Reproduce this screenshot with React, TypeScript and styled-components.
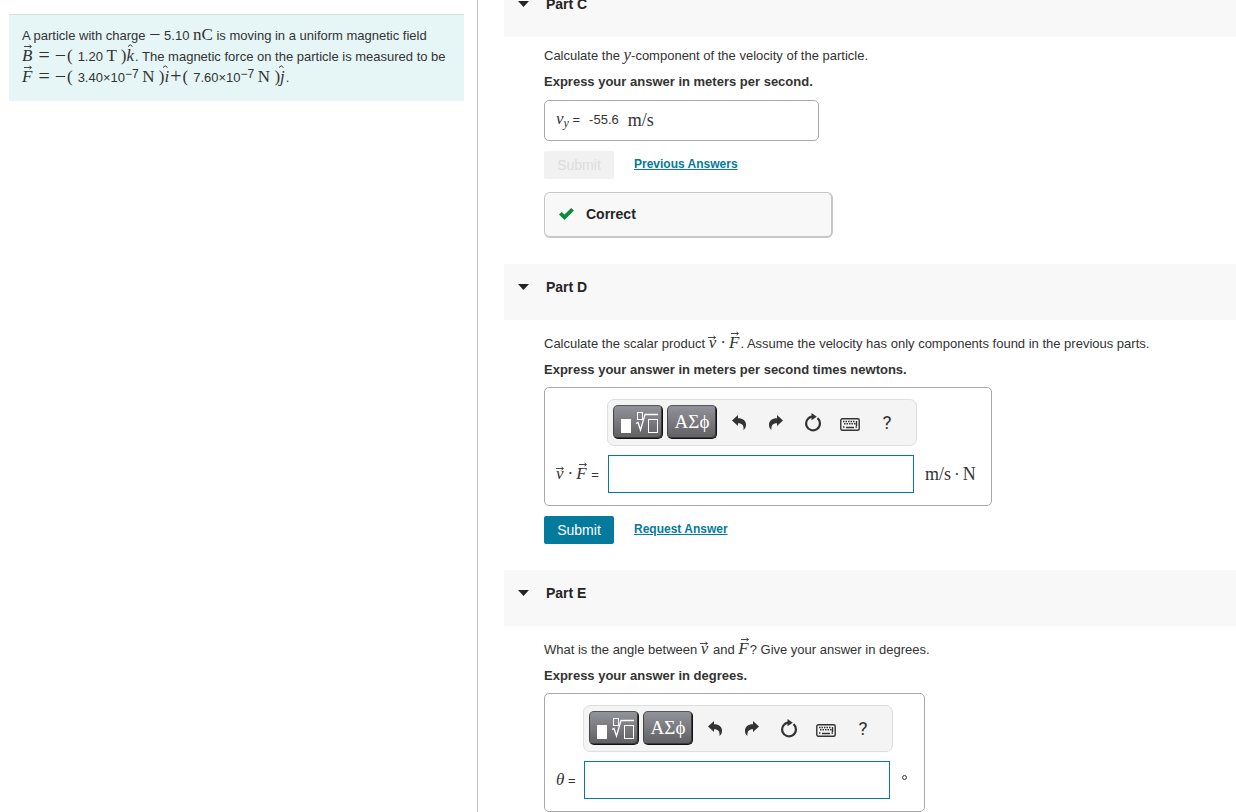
import React from "react";
import styled, { createGlobalStyle } from "styled-components";

const GlobalStyle = createGlobalStyle`
  * { box-sizing: border-box; }
  body {
    margin: 0;
    background: #fff;
    color: #333;
    font: 13px/21px "Liberation Sans", Arial, sans-serif;
  }
  p, h2 { margin: 0; }
`;

const Page = styled.div`
  display: grid;
  grid-template-columns: minmax(0, 478fr) minmax(0, 758fr);
  min-height: 100vh;
`;

const ProblemPane = styled.aside`
  padding: 14px 13px 0 9px;
  border-right: 1px solid #bcc3ca;
`;

const Problem = styled.p`
  padding: 10px 13px 13px;
  border-top: 1px solid #d9dddd;
  background: #e6f6f6;
`;

const PartsPane = styled.main`
  padding-left: 26px;
  overflow: hidden;
`;

const PartList = styled.div`
  display: flex;
  flex-direction: column;
  gap: 26px;
  margin-top: -19px;
`;

const PartHeader = styled.header`
  display: flex;
  align-items: flex-start;
  gap: 17px;
  height: 56px;
  padding: 13px 14px;
  background: #f8f8f8;
  color: #252525;
`;

const PartTitle = styled.h2`
  font-size: 14px;
  line-height: 21px;
`;

const Caret = styled.svg`
  width: 11px;
  height: 6px;
  margin-top: 7px;
`;

const PartBody = styled.div<{ $top: number }>`
  padding: ${(p) => p.$top}px 20px 0 40px;
`;

const Prompt = styled.p`
  height: 21px;
  margin-bottom: 5px;
  white-space: nowrap;
`;

const Instruction = styled.p`
  margin-bottom: 7px;
  font-weight: bold;
`;

const MathText = styled.span<{ $italic?: boolean }>`
  font-family: "Liberation Serif", "Times New Roman", serif;
  font-size: 17px;
  font-style: ${(p) => (p.$italic ? "italic" : "normal")};
  line-height: 16px;
`;

const Operator = styled(MathText)<{ $gap?: number }>`
  margin: 0 ${(p) => p.$gap ?? 0}px;
  font-size: 20px;
  vertical-align: -1px;
`;

const Paren = styled(MathText)`
  margin: 0 5px 0 1px;
`;

const Dot = styled(MathText)`
  margin: 0 3px;
`;

const Subscript = styled.sub`
  font-size: 12px;
  line-height: 1;
  vertical-align: -3px;
`;

const Power = styled.sup`
  font-size: 12px;
  line-height: 1;
  vertical-align: 4px;
`;

const Accented = styled(MathText)`
  position: relative;
  display: inline-block;
  margin-right: 1px;
`;

const AccentMark = styled.svg<{ $low?: boolean }>`
  position: absolute;
  top: ${(p) => (p.$low ? 0 : -4)}px;
  right: 0;
  width: 8px;
  height: 5px;
  fill: none;
  stroke: currentColor;
`;

const AnswerValue = styled.div`
  display: flex;
  align-items: center;
  gap: 9px;
  width: 275px;
  height: 41px;
  margin-top: 8px;
  padding: 0 11px 2px;
  border: 1px solid #a9a9a9;
  border-radius: 5px;
`;

const Actions = styled.div`
  display: flex;
  gap: 20px;
  margin-top: 10px;
`;

const SubmitButton = styled.button`
  width: 70px;
  height: 28px;
  padding: 0;
  border: 0;
  border-radius: 2px;
  background: #047a9c;
  color: #fff;
  font: 14px "Liberation Sans", Arial, sans-serif;

  &:disabled {
    background: #f1f1f1;
    color: #dcdcdc;
  }
`;

const ActionLink = styled.a`
  height: 26px;
  color: #047a9c;
  font-size: 12px;
  line-height: 26px;
  font-weight: bold;
`;

const Feedback = styled.div`
  display: flex;
  align-items: center;
  gap: 12px;
  width: 289px;
  height: 46px;
  margin-top: 13px;
  padding: 0 14px;
  border: 1px solid #c7c7c7;
  border-right-width: 2px;
  border-bottom-width: 2px;
  border-radius: 6px;
  background: #f8f8f8;
  color: #252525;
  font-size: 14px;
  font-weight: bold;
`;

const AnswerForm = styled.div<{ $label: number }>`
  display: grid;
  grid-template-columns: ${(p) => p.$label}px 310px auto;
  column-gap: 8px;
  row-gap: 9px;
  align-items: center;
  width: fit-content;
  padding: 11px 15px 12px 11px;
  border: 1px solid #a9a9a9;
  border-radius: 5px;
`;

const Toolbar = styled.div`
  grid-column: 2;
  display: flex;
  align-items: flex-start;
  height: 47px;
  padding: 5px;
  border: 1px solid #dedede;
  border-radius: 7px;
  background: #f4f4f4;
`;

const PaletteButton = styled.button`
  display: flex;
  align-items: center;
  justify-content: center;
  width: 50px;
  height: 34px;
  margin-right: 4px;
  padding: 0;
  border: 1px solid #111;
  border-top-color: #555;
  border-left-color: #444;
  border-radius: 5px;
  background: linear-gradient(#92929a, #606062);
  box-shadow: inset -1px -1px 0 #3a3a3a;
  color: #fff;
  font: 19px "Liberation Serif", "Times New Roman", serif;
`;

const ToolButton = styled.button`
  display: flex;
  align-items: center;
  justify-content: center;
  width: 37px;
  height: 34px;
  padding: 0 1px 0 0;
  border: 0;
  background: none;
  color: #333;
  font: 19px Roboto, sans-serif;
`;

const FieldLabel = styled.label`
  grid-column: 1;
  white-space: nowrap;
`;

const AnswerInput = styled.input`
  width: 306px;
  height: 38px;
  margin-left: 1px;
  padding: 0 8px;
  border: 1px solid #047a9c;
  border-radius: 0;
  background: #fff;
  font: inherit;
`;

const Unit = styled(MathText)`
  font-size: 18px;
  white-space: nowrap;
`;

const Degree = styled.svg`
  display: block;
  width: 8px;
  height: 10px;
`;

function Vec({ children }: { children: string }) {
  return (
    <Accented $italic>
      {children}
      <AccentMark $low={children === "v"} viewBox="0 0 8 5" aria-hidden="true">
        <path d="M0 2.5H7M5.500 1L7.500 2.5L5.500 4" strokeWidth=".9" />
      </AccentMark>
    </Accented>
  );
}

function Hat({ children }: { children: string }) {
  return (
    <Accented $italic>
      {children}
      <AccentMark viewBox="0 0 8 5" aria-hidden="true">
        <path d="M2 2.500L4.200 .8L6.500 2.500" />
      </AccentMark>
    </Accented>
  );
}

function CheckIcon() {
  return (
    <svg width="15" height="14" viewBox="0 0 15 14" fill="#0a8a3c" aria-hidden="true">
      <path d="M0 6.600L2.700 3.900L5.500 6.500L12.200 0L14.900 2.500L5.500 12Z" />
    </svg>
  );
}

function TemplateIcon() {
  return (
    <svg width="40" height="24" viewBox="0 0 40 24" fill="none" stroke="#fff" aria-hidden="true">
      <rect x="3" y="9" width="10" height="14" fill="#fff" stroke="none" />
      <rect x="19.5" y="2.5" width="5" height="7" />
      <path d="M18 13.5L20 12.5L22.5 20L27 4.500H41" strokeWidth="1.3" />
      <rect x="30.500" y="9.500" width="9" height="13" />
    </svg>
  );
}

function UndoIcon() {
  return (
    <svg width="14" height="15" viewBox="0 0 14 15" fill="currentColor" aria-hidden="true">
      <path d="M0 5.500L6 0V3.300C11 3.300 14 6 14 9.700C14 12 13 14 11.500 15C12 11 10.500 8.300 6 8.300V11Z" />
    </svg>
  );
}

function RedoIcon() {
  return (
    <svg width="14" height="15" viewBox="0 0 14 15" fill="currentColor" aria-hidden="true">
      <path d="M14 5.500L8 0V3.300C3 3.300 0 6 0 9.700C0 12 1 14 2.500 15C2 11 3.500 8.300 8 8.300V11Z" />
    </svg>
  );
}

function ResetIcon() {
  return (
    <svg width="18" height="19" viewBox="0 0 18 19" aria-hidden="true">
      <path d="M13.500 5.200A6.900 6.900 0 1 1 8.500 3.600" fill="none" stroke="currentColor" strokeWidth="2.200" />
      <path d="M7.500 0L12.800 3.800L7.500 7.200Z" fill="currentColor" />
    </svg>
  );
}

function KeyboardIcon() {
  return (
    <svg width="20" height="17" viewBox="0 -4 20 17" fill="none" stroke="currentColor" aria-hidden="true">
      <rect x=".8" y=".8" width="18.400" height="11.400" rx="1.500" strokeWidth="1.400" />
      <path d="M3 3.500H15.500M4 5.800H16" strokeDasharray="1.500 1" strokeWidth="1.400" />
      <path d="M3 9H4.500M6 9.500H14M15.500 9H17M16.500 3V8" strokeWidth="1.400" />
    </svg>
  );
}

function EditorToolbar() {
  return (
    <Toolbar role="toolbar" aria-label="Equation editor">
      <PaletteButton type="button" aria-label="Templates"><TemplateIcon /></PaletteButton>
      <PaletteButton type="button" aria-label="Symbols">ΑΣϕ</PaletteButton>
      <ToolButton type="button" aria-label="Undo"><UndoIcon /></ToolButton>
      <ToolButton type="button" aria-label="Redo"><RedoIcon /></ToolButton>
      <ToolButton type="button" aria-label="Reset"><ResetIcon /></ToolButton>
      <ToolButton type="button" aria-label="Keyboard shortcuts"><KeyboardIcon /></ToolButton>
      <ToolButton type="button" aria-label="Help">?</ToolButton>
    </Toolbar>
  );
}

function Part({ title, top = 13, children }: { title: string; top?: number; children: React.ReactNode }) {
  return (
    <section>
      <PartHeader>
        <Caret viewBox="0 0 11 6" fill="currentColor" aria-hidden="true"><path d="M0 0H11L5.500 6Z" /></Caret>
        <PartTitle>{title}</PartTitle>
      </PartHeader>
      <PartBody $top={top}>{children}</PartBody>
    </section>
  );
}

export default function App() {
  return (
    <>
      <GlobalStyle />
      <Page>
        <ProblemPane>
          <Problem>
            A particle with charge <Operator>−</Operator> 5.10 <MathText>nC</MathText> is moving in a uniform magnetic field
            <br />
            <Vec>B</Vec><Operator $gap={5}>=</Operator><Operator>−</Operator><Paren>(</Paren>1.20 <MathText>T )</MathText><Hat>k</Hat>. The magnetic force on the particle is measured to be
            <br />
            <Vec>F</Vec><Operator $gap={5}>=</Operator><Operator>−</Operator><Paren>(</Paren>3.40×10<Power>−7</Power> <MathText>N )</MathText><Hat>i</Hat>
            <Operator>+</Operator><Paren>(</Paren>7.60×10<Power>−7</Power> <MathText>N )</MathText><Hat>j</Hat>.
          </Problem>
        </ProblemPane>
        <PartsPane>
          <PartList>
            <Part title="Part C" top={8}>
              <Prompt>Calculate the <MathText $italic>y</MathText>-component of the velocity of the particle.</Prompt>
              <Instruction>Express your answer in meters per second.</Instruction>
              <AnswerValue>
                <span><MathText $italic>v<Subscript>y</Subscript></MathText> =</span>
                <span>-55.6</span>
                <Unit>m/s</Unit>
              </AnswerValue>
              <Actions>
                <SubmitButton type="button" disabled>Submit</SubmitButton>
                <ActionLink href="#previous">Previous Answers</ActionLink>
              </Actions>
              <Feedback role="status"><CheckIcon />Correct</Feedback>
            </Part>
            <Part title="Part D">
              <Prompt>
                Calculate the scalar product <Vec>v</Vec><Dot>·</Dot><Vec>F</Vec>. Assume the velocity has only components found in the previous parts.
              </Prompt>
              <Instruction>Express your answer in meters per second times newtons.</Instruction>
              <AnswerForm $label={43}>
                <EditorToolbar />
                <FieldLabel htmlFor="product"><Vec>v</Vec><Dot>·</Dot><Vec>F</Vec> =</FieldLabel>
                <AnswerInput id="product" type="text" />
                <Unit>m/s<Dot>·</Dot>N</Unit>
              </AnswerForm>
              <Actions>
                <SubmitButton type="button">Submit</SubmitButton>
                <ActionLink href="#request">Request Answer</ActionLink>
              </Actions>
            </Part>
            <Part title="Part E">
              <Prompt>What is the angle between <Vec>v</Vec> and <Vec>F</Vec>? Give your answer in degrees.</Prompt>
              <Instruction>Express your answer in degrees.</Instruction>
              <AnswerForm $label={19}>
                <EditorToolbar />
                <FieldLabel htmlFor="angle"><MathText $italic>θ</MathText> =</FieldLabel>
                <AnswerInput id="angle" type="text" />
                <Degree viewBox="0 0 8 10" fill="none" stroke="currentColor" role="img" aria-label="degrees">
                  <circle cx="3.500" cy="2.500" r="2" />
                </Degree>
              </AnswerForm>
            </Part>
          </PartList>
        </PartsPane>
      </Page>
    </>
  );
}
